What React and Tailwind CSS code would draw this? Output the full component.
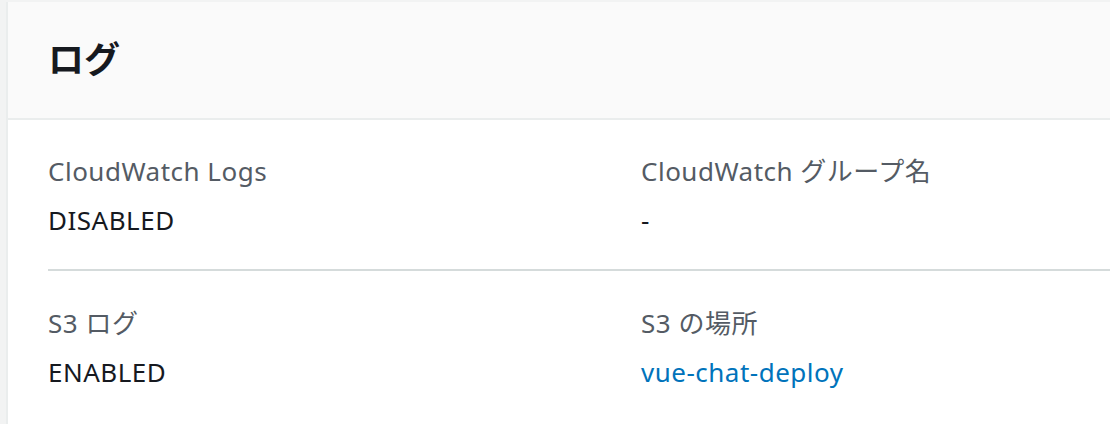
import React from 'react';

const Field = ({ label, value, link }) => (
  <div className="flex flex-col">
    <span className="text-[26px] leading-[34px] tracking-[0.5px] text-[#545b64]">{label}</span>
    <span className={`mt-[15px] text-[26px] leading-[34px] tracking-[0.5px] ${link ? 'text-[#0073bb]' : 'text-[#16191f]'}`}>{value}</span>
  </div>
);

const App = () => (
  <div
    className="w-[1110px] h-[424px] overflow-hidden bg-[#f2f3f3] pl-[6px] pt-[2px]"
    style={{ fontFamily: '"Noto Sans", "Noto Sans CJK JP", sans-serif' }}
  >
    <div className="w-[1120px] h-[440px] bg-white border-l-2 border-[#eaeded]">
      {/* Header */}
      <div className="h-[118px] bg-[#fafafa] border-b-2 border-[#eaeded] flex items-center pl-[40px]">
        <h2 className="text-[36px] font-bold text-[#16191f]">ログ</h2>
      </div>

      {/* Body */}
      <div className="pl-[40px]">
        <div className="grid grid-cols-[593px_1fr] pt-[34px] pb-[32px] border-b-2 border-[#d5dbdb]">
          <Field label="CloudWatch Logs" value="DISABLED" />
          <Field label="CloudWatch グループ名" value="-" />
        </div>
        <div className="grid grid-cols-[593px_1fr] pt-[35px]">
          <Field label="S3 ログ" value="ENABLED" />
          <Field label="S3 の場所" value="vue-chat-deploy" link />
        </div>
      </div>
    </div>
  </div>
);

export default App;
